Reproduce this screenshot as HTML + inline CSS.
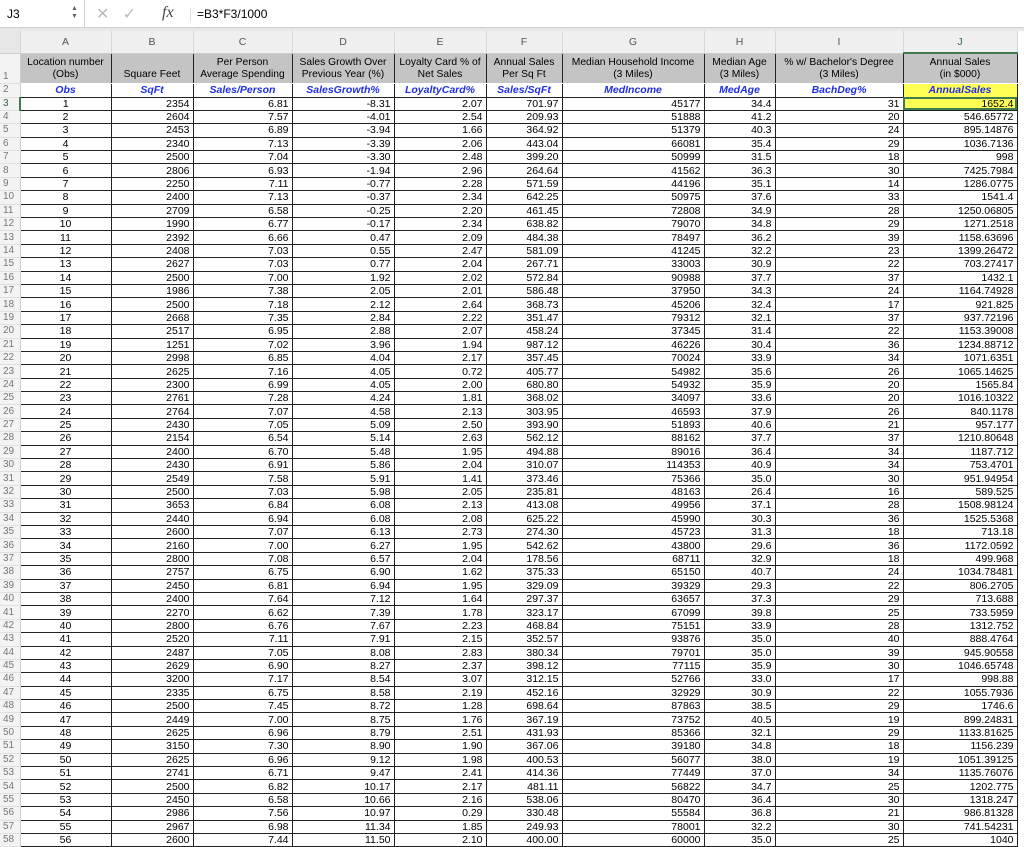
<!DOCTYPE html><html><head><meta charset="utf-8"><style>
*{margin:0;padding:0;box-sizing:border-box}
body{width:1024px;height:838px;overflow:hidden;background:#fff;font-family:"Liberation Sans",Arial,sans-serif;position:relative}
#fb{position:absolute;left:0;top:0;width:1024px;height:28px;background:#fff;border-bottom:1px solid #cfcfcf}
#gap{position:absolute;left:0;top:28px;width:1024px;height:3px;background:#e8e8e8}
#nb{position:absolute;left:0;top:0;width:85px;height:28px;border-right:1px solid #d0d0d0;font-size:12px;padding:7px 0 0 7px}
#arr{position:absolute;left:71px;top:5px;font-size:7px;color:#666;line-height:8px}
#ic{position:absolute;left:96px;top:4px;font-size:16px;color:#bbb}
#fx{position:absolute;left:162px;top:4px;font-size:16px;font-style:italic;font-family:"Liberation Serif",serif;color:#444}
#fm{position:absolute;left:190px;top:8px;font-size:12px;border-left:1px solid #ddd;padding-left:6px;height:14px;line-height:13px}
table{position:absolute;left:0;top:31px;border-collapse:collapse;table-layout:fixed;font-size:10.5px;width:1017px}
td,th{overflow:hidden;white-space:nowrap;padding:0 3px;line-height:12px}
tr.ch th{height:22px;background:#efefef;font-weight:normal;color:#555;border-right:1px solid #d8d8d8;border-bottom:1px solid #ccc;font-size:10.5px}
tr.h1 td{height:30px;background:#c4c4c4;text-align:center;line-height:12.5px;vertical-align:bottom;border-right:1px solid #222;border-bottom:1px solid #fff;padding:0 1px 1px;font-size:10.3px}
tr.h2 td{height:14px;text-align:center;color:#1f2ee6;font-weight:bold;font-style:italic;border-right:1px solid #222;border-bottom:1px solid #222}
th.r{background:#f3f3f3;color:#777;font-weight:normal;text-align:left;padding-left:3px;border-right:1px solid #ccc;border-bottom:1px solid #e0e0e0;font-size:10px}
tbody tr.d td{height:13.4px;text-align:right;border-right:1px solid #222;border-bottom:1px solid #222;line-height:12px}
tbody tr.d td:nth-child(2){text-align:center}
.y{background:#ffff55!important}
.sel{outline:2px solid #3f7d4e;outline-offset:-2px}
</style></head><body>
<div id="fb"><div id="nb">J3</div><div id="arr">▲<br>▼</div><div id="ic">✕ &nbsp; ✓</div><div id="fx">fx</div><div id="fm">=B3*F3/1000</div></div>
<div id="gap"></div>
<table>
<colgroup><col style="width:20px"><col style="width:91px"><col style="width:82px"><col style="width:99px"><col style="width:102px"><col style="width:92px"><col style="width:76px"><col style="width:142px"><col style="width:71px"><col style="width:128px"><col style="width:114px"></colgroup>
<tr class="ch"><th style="background:#e6e6e6"></th><th>A</th><th>B</th><th>C</th><th>D</th><th>E</th><th>F</th><th>G</th><th>H</th><th>I</th><th style="color:#2d6b3a;border-bottom:2px solid #3f7d4e">J</th></tr>
<tr class="h1"><th class="r" style="vertical-align:bottom">1</th><td>Location number<br>(Obs)</td><td>Square Feet</td><td>Per Person<br>Average Spending</td><td>Sales Growth Over<br>Previous Year (%)</td><td>Loyalty Card % of<br>Net Sales</td><td>Annual Sales<br>Per Sq Ft</td><td>Median Household Income<br>(3 Miles)</td><td>Median Age<br>(3 Miles)</td><td>% w/ Bachelor's Degree<br>(3 Miles)</td><td>Annual Sales<br>(in $000)</td></tr>
<tr class="h2"><th class="r">2</th><td>Obs</td><td>SqFt</td><td>Sales/Person</td><td>SalesGrowth%</td><td>LoyaltyCard%</td><td>Sales/SqFt</td><td>MedIncome</td><td>MedAge</td><td>BachDeg%</td><td class="y">AnnualSales</td></tr>
<tbody>
<tr class="d"><th class="r" style="color:#2d6b3a;border-right:2px solid #3f7d4e">3</th><td>1</td><td>2354</td><td>6.81</td><td>-8.31</td><td>2.07</td><td>701.97</td><td>45177</td><td>34.4</td><td>31</td><td class="y sel">1652.4</td></tr>
<tr class="d"><th class="r">4</th><td>2</td><td>2604</td><td>7.57</td><td>-4.01</td><td>2.54</td><td>209.93</td><td>51888</td><td>41.2</td><td>20</td><td>546.65772</td></tr>
<tr class="d"><th class="r">5</th><td>3</td><td>2453</td><td>6.89</td><td>-3.94</td><td>1.66</td><td>364.92</td><td>51379</td><td>40.3</td><td>24</td><td>895.14876</td></tr>
<tr class="d"><th class="r">6</th><td>4</td><td>2340</td><td>7.13</td><td>-3.39</td><td>2.06</td><td>443.04</td><td>66081</td><td>35.4</td><td>29</td><td>1036.7136</td></tr>
<tr class="d"><th class="r">7</th><td>5</td><td>2500</td><td>7.04</td><td>-3.30</td><td>2.48</td><td>399.20</td><td>50999</td><td>31.5</td><td>18</td><td>998</td></tr>
<tr class="d"><th class="r">8</th><td>6</td><td>2806</td><td>6.93</td><td>-1.94</td><td>2.96</td><td>264.64</td><td>41562</td><td>36.3</td><td>30</td><td>7425.7984</td></tr>
<tr class="d"><th class="r">9</th><td>7</td><td>2250</td><td>7.11</td><td>-0.77</td><td>2.28</td><td>571.59</td><td>44196</td><td>35.1</td><td>14</td><td>1286.0775</td></tr>
<tr class="d"><th class="r">10</th><td>8</td><td>2400</td><td>7.13</td><td>-0.37</td><td>2.34</td><td>642.25</td><td>50975</td><td>37.6</td><td>33</td><td>1541.4</td></tr>
<tr class="d"><th class="r">11</th><td>9</td><td>2709</td><td>6.58</td><td>-0.25</td><td>2.20</td><td>461.45</td><td>72808</td><td>34.9</td><td>28</td><td>1250.06805</td></tr>
<tr class="d"><th class="r">12</th><td>10</td><td>1990</td><td>6.77</td><td>-0.17</td><td>2.34</td><td>638.82</td><td>79070</td><td>34.8</td><td>29</td><td>1271.2518</td></tr>
<tr class="d"><th class="r">13</th><td>11</td><td>2392</td><td>6.66</td><td>0.47</td><td>2.09</td><td>484.38</td><td>78497</td><td>36.2</td><td>39</td><td>1158.63696</td></tr>
<tr class="d"><th class="r">14</th><td>12</td><td>2408</td><td>7.03</td><td>0.55</td><td>2.47</td><td>581.09</td><td>41245</td><td>32.2</td><td>23</td><td>1399.26472</td></tr>
<tr class="d"><th class="r">15</th><td>13</td><td>2627</td><td>7.03</td><td>0.77</td><td>2.04</td><td>267.71</td><td>33003</td><td>30.9</td><td>22</td><td>703.27417</td></tr>
<tr class="d"><th class="r">16</th><td>14</td><td>2500</td><td>7.00</td><td>1.92</td><td>2.02</td><td>572.84</td><td>90988</td><td>37.7</td><td>37</td><td>1432.1</td></tr>
<tr class="d"><th class="r">17</th><td>15</td><td>1986</td><td>7.38</td><td>2.05</td><td>2.01</td><td>586.48</td><td>37950</td><td>34.3</td><td>24</td><td>1164.74928</td></tr>
<tr class="d"><th class="r">18</th><td>16</td><td>2500</td><td>7.18</td><td>2.12</td><td>2.64</td><td>368.73</td><td>45206</td><td>32.4</td><td>17</td><td>921.825</td></tr>
<tr class="d"><th class="r">19</th><td>17</td><td>2668</td><td>7.35</td><td>2.84</td><td>2.22</td><td>351.47</td><td>79312</td><td>32.1</td><td>37</td><td>937.72196</td></tr>
<tr class="d"><th class="r">20</th><td>18</td><td>2517</td><td>6.95</td><td>2.88</td><td>2.07</td><td>458.24</td><td>37345</td><td>31.4</td><td>22</td><td>1153.39008</td></tr>
<tr class="d"><th class="r">21</th><td>19</td><td>1251</td><td>7.02</td><td>3.96</td><td>1.94</td><td>987.12</td><td>46226</td><td>30.4</td><td>36</td><td>1234.88712</td></tr>
<tr class="d"><th class="r">22</th><td>20</td><td>2998</td><td>6.85</td><td>4.04</td><td>2.17</td><td>357.45</td><td>70024</td><td>33.9</td><td>34</td><td>1071.6351</td></tr>
<tr class="d"><th class="r">23</th><td>21</td><td>2625</td><td>7.16</td><td>4.05</td><td>0.72</td><td>405.77</td><td>54982</td><td>35.6</td><td>26</td><td>1065.14625</td></tr>
<tr class="d"><th class="r">24</th><td>22</td><td>2300</td><td>6.99</td><td>4.05</td><td>2.00</td><td>680.80</td><td>54932</td><td>35.9</td><td>20</td><td>1565.84</td></tr>
<tr class="d"><th class="r">25</th><td>23</td><td>2761</td><td>7.28</td><td>4.24</td><td>1.81</td><td>368.02</td><td>34097</td><td>33.6</td><td>20</td><td>1016.10322</td></tr>
<tr class="d"><th class="r">26</th><td>24</td><td>2764</td><td>7.07</td><td>4.58</td><td>2.13</td><td>303.95</td><td>46593</td><td>37.9</td><td>26</td><td>840.1178</td></tr>
<tr class="d"><th class="r">27</th><td>25</td><td>2430</td><td>7.05</td><td>5.09</td><td>2.50</td><td>393.90</td><td>51893</td><td>40.6</td><td>21</td><td>957.177</td></tr>
<tr class="d"><th class="r">28</th><td>26</td><td>2154</td><td>6.54</td><td>5.14</td><td>2.63</td><td>562.12</td><td>88162</td><td>37.7</td><td>37</td><td>1210.80648</td></tr>
<tr class="d"><th class="r">29</th><td>27</td><td>2400</td><td>6.70</td><td>5.48</td><td>1.95</td><td>494.88</td><td>89016</td><td>36.4</td><td>34</td><td>1187.712</td></tr>
<tr class="d"><th class="r">30</th><td>28</td><td>2430</td><td>6.91</td><td>5.86</td><td>2.04</td><td>310.07</td><td>114353</td><td>40.9</td><td>34</td><td>753.4701</td></tr>
<tr class="d"><th class="r">31</th><td>29</td><td>2549</td><td>7.58</td><td>5.91</td><td>1.41</td><td>373.46</td><td>75366</td><td>35.0</td><td>30</td><td>951.94954</td></tr>
<tr class="d"><th class="r">32</th><td>30</td><td>2500</td><td>7.03</td><td>5.98</td><td>2.05</td><td>235.81</td><td>48163</td><td>26.4</td><td>16</td><td>589.525</td></tr>
<tr class="d"><th class="r">33</th><td>31</td><td>3653</td><td>6.84</td><td>6.08</td><td>2.13</td><td>413.08</td><td>49956</td><td>37.1</td><td>28</td><td>1508.98124</td></tr>
<tr class="d"><th class="r">34</th><td>32</td><td>2440</td><td>6.94</td><td>6.08</td><td>2.08</td><td>625.22</td><td>45990</td><td>30.3</td><td>36</td><td>1525.5368</td></tr>
<tr class="d"><th class="r">35</th><td>33</td><td>2600</td><td>7.07</td><td>6.13</td><td>2.73</td><td>274.30</td><td>45723</td><td>31.3</td><td>18</td><td>713.18</td></tr>
<tr class="d"><th class="r">36</th><td>34</td><td>2160</td><td>7.00</td><td>6.27</td><td>1.95</td><td>542.62</td><td>43800</td><td>29.6</td><td>36</td><td>1172.0592</td></tr>
<tr class="d"><th class="r">37</th><td>35</td><td>2800</td><td>7.08</td><td>6.57</td><td>2.04</td><td>178.56</td><td>68711</td><td>32.9</td><td>18</td><td>499.968</td></tr>
<tr class="d"><th class="r">38</th><td>36</td><td>2757</td><td>6.75</td><td>6.90</td><td>1.62</td><td>375.33</td><td>65150</td><td>40.7</td><td>24</td><td>1034.78481</td></tr>
<tr class="d"><th class="r">39</th><td>37</td><td>2450</td><td>6.81</td><td>6.94</td><td>1.95</td><td>329.09</td><td>39329</td><td>29.3</td><td>22</td><td>806.2705</td></tr>
<tr class="d"><th class="r">40</th><td>38</td><td>2400</td><td>7.64</td><td>7.12</td><td>1.64</td><td>297.37</td><td>63657</td><td>37.3</td><td>29</td><td>713.688</td></tr>
<tr class="d"><th class="r">41</th><td>39</td><td>2270</td><td>6.62</td><td>7.39</td><td>1.78</td><td>323.17</td><td>67099</td><td>39.8</td><td>25</td><td>733.5959</td></tr>
<tr class="d"><th class="r">42</th><td>40</td><td>2800</td><td>6.76</td><td>7.67</td><td>2.23</td><td>468.84</td><td>75151</td><td>33.9</td><td>28</td><td>1312.752</td></tr>
<tr class="d"><th class="r">43</th><td>41</td><td>2520</td><td>7.11</td><td>7.91</td><td>2.15</td><td>352.57</td><td>93876</td><td>35.0</td><td>40</td><td>888.4764</td></tr>
<tr class="d"><th class="r">44</th><td>42</td><td>2487</td><td>7.05</td><td>8.08</td><td>2.83</td><td>380.34</td><td>79701</td><td>35.0</td><td>39</td><td>945.90558</td></tr>
<tr class="d"><th class="r">45</th><td>43</td><td>2629</td><td>6.90</td><td>8.27</td><td>2.37</td><td>398.12</td><td>77115</td><td>35.9</td><td>30</td><td>1046.65748</td></tr>
<tr class="d"><th class="r">46</th><td>44</td><td>3200</td><td>7.17</td><td>8.54</td><td>3.07</td><td>312.15</td><td>52766</td><td>33.0</td><td>17</td><td>998.88</td></tr>
<tr class="d"><th class="r">47</th><td>45</td><td>2335</td><td>6.75</td><td>8.58</td><td>2.19</td><td>452.16</td><td>32929</td><td>30.9</td><td>22</td><td>1055.7936</td></tr>
<tr class="d"><th class="r">48</th><td>46</td><td>2500</td><td>7.45</td><td>8.72</td><td>1.28</td><td>698.64</td><td>87863</td><td>38.5</td><td>29</td><td>1746.6</td></tr>
<tr class="d"><th class="r">49</th><td>47</td><td>2449</td><td>7.00</td><td>8.75</td><td>1.76</td><td>367.19</td><td>73752</td><td>40.5</td><td>19</td><td>899.24831</td></tr>
<tr class="d"><th class="r">50</th><td>48</td><td>2625</td><td>6.96</td><td>8.79</td><td>2.51</td><td>431.93</td><td>85366</td><td>32.1</td><td>29</td><td>1133.81625</td></tr>
<tr class="d"><th class="r">51</th><td>49</td><td>3150</td><td>7.30</td><td>8.90</td><td>1.90</td><td>367.06</td><td>39180</td><td>34.8</td><td>18</td><td>1156.239</td></tr>
<tr class="d"><th class="r">52</th><td>50</td><td>2625</td><td>6.96</td><td>9.12</td><td>1.98</td><td>400.53</td><td>56077</td><td>38.0</td><td>19</td><td>1051.39125</td></tr>
<tr class="d"><th class="r">53</th><td>51</td><td>2741</td><td>6.71</td><td>9.47</td><td>2.41</td><td>414.36</td><td>77449</td><td>37.0</td><td>34</td><td>1135.76076</td></tr>
<tr class="d"><th class="r">54</th><td>52</td><td>2500</td><td>6.82</td><td>10.17</td><td>2.17</td><td>481.11</td><td>56822</td><td>34.7</td><td>25</td><td>1202.775</td></tr>
<tr class="d"><th class="r">55</th><td>53</td><td>2450</td><td>6.58</td><td>10.66</td><td>2.16</td><td>538.06</td><td>80470</td><td>36.4</td><td>30</td><td>1318.247</td></tr>
<tr class="d"><th class="r">56</th><td>54</td><td>2986</td><td>7.56</td><td>10.97</td><td>0.29</td><td>330.48</td><td>55584</td><td>36.8</td><td>21</td><td>986.81328</td></tr>
<tr class="d"><th class="r">57</th><td>55</td><td>2967</td><td>6.98</td><td>11.34</td><td>1.85</td><td>249.93</td><td>78001</td><td>32.2</td><td>30</td><td>741.54231</td></tr>
<tr class="d"><th class="r">58</th><td>56</td><td>2600</td><td>7.44</td><td>11.50</td><td>2.10</td><td>400.00</td><td>60000</td><td>35.0</td><td>25</td><td>1040</td></tr>
</tbody></table>
</body></html>
